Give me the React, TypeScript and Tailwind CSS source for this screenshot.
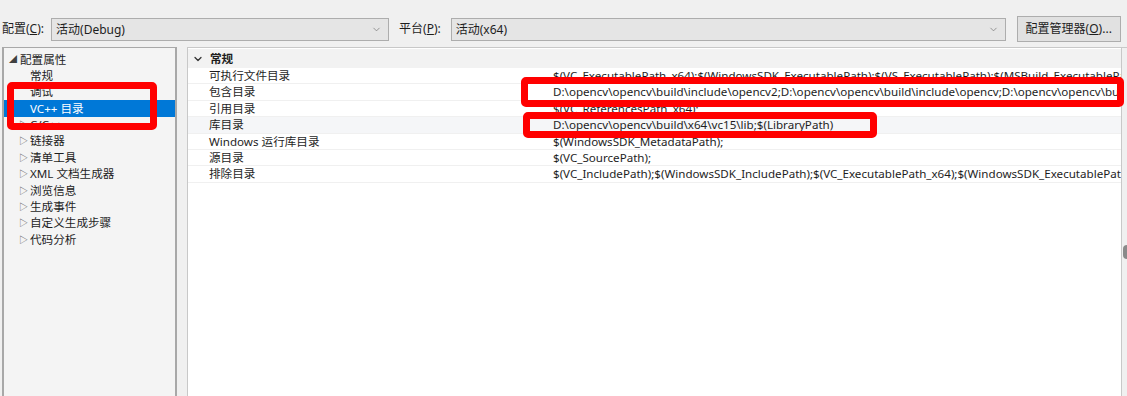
import { ChevronDown } from "lucide-react";

const font = { fontFamily: '"Noto Sans", "Noto Sans CJK SC", sans-serif' };

type TreeItem = { label: string; kind: "open" | "leaf" | "closed"; selected?: boolean };

const tree: TreeItem[] = [
  { label: "配置属性", kind: "open" },
  { label: "常规", kind: "leaf" },
  { label: "调试", kind: "leaf" },
  { label: "VC++ 目录", kind: "leaf", selected: true },
  { label: "C/C++", kind: "closed" },
  { label: "链接器", kind: "closed" },
  { label: "清单工具", kind: "closed" },
  { label: "XML 文档生成器", kind: "closed" },
  { label: "浏览信息", kind: "closed" },
  { label: "生成事件", kind: "closed" },
  { label: "自定义生成步骤", kind: "closed" },
  { label: "代码分析", kind: "closed" },
];

const props = [
  {
    name: "可执行文件目录",
    value:
      "$(VC_ExecutablePath_x64);$(WindowsSDK_ExecutablePath);$(VS_ExecutablePath);$(MSBuild_ExecutablePath);$(FxCopDir);$(PATH);",
  },
  {
    name: "包含目录",
    value:
      "D:\\opencv\\opencv\\build\\include\\opencv2;D:\\opencv\\opencv\\build\\include\\opencv;D:\\opencv\\opencv\\build\\include;$(IncludePath)",
  },
  { name: "引用目录", value: "$(VC_ReferencesPath_x64);" },
  { name: "库目录", value: "D:\\opencv\\opencv\\build\\x64\\vc15\\lib;$(LibraryPath)", tint: true },
  { name: "Windows 运行库目录", value: "$(WindowsSDK_MetadataPath);" },
  { name: "源目录", value: "$(VC_SourcePath);" },
  {
    name: "排除目录",
    value:
      "$(VC_IncludePath);$(WindowsSDK_IncludePath);$(VC_ExecutablePath_x64);$(WindowsSDK_ExecutablePath);$(VS_ExecutablePath);",
  },
];

function Combo({ text, width }: { text: string; width: string }) {
  return (
    <div className={`${width} shrink-0 h-[23px] flex items-center border border-[#adadad] bg-[#e5e5e5] pl-[4px] pr-[6px]`}>
      <span className="flex-1 text-[12px] text-[#1e1e1e] whitespace-nowrap">{text}</span>
      <ChevronDown className="w-[11px] h-[11px] text-[#707070]" strokeWidth={1.5} />
    </div>
  );
}

export default function App() {
  return (
    <div className="relative w-[1127px] h-[396px] overflow-hidden bg-[#f0f0f0] text-[#1e1e1e]" style={font}>
      {/* top bar */}
      <div className="h-[47px] flex items-end pb-[6px] pl-[2px]">
        <span className="text-[12px] mr-[7px] mb-[3px] whitespace-nowrap">
          配置(<span className="underline">C</span>):
        </span>
        <Combo text="活动(Debug)" width="w-[338px]" />
        <span className="text-[12px] ml-[10px] mr-[10px] mb-[3px] whitespace-nowrap">
          平台(<span className="underline">P</span>):
        </span>
        <Combo text="活动(x64)" width="w-[555px]" />
        <button className="shrink-0 ml-[11px] mb-[-1px] w-[104px] h-[26px] border border-[#adadad] bg-[#e1e1e1] text-[12px] whitespace-nowrap">
          配置管理器(<span className="underline">O</span>)...
        </button>
      </div>

      <div className="flex h-[349px]">
        {/* tree */}
        <div className="shrink-0 ml-[2px] w-[175px] h-full border-l-2 border-r-2 border-t border-[#a8a8a8] bg-[#f4f4f4] pt-[3px]">
          {tree.map((t) => (
            <div
              key={t.label}
              className={`h-[16.4px] flex items-center text-[11.6px] whitespace-nowrap ${
                t.selected ? "bg-[#0078d7] text-white" : ""
              }`}
            >
              {t.kind === "open" && (
                <>
                  <span className="ml-[5px] w-[11px] text-[8px] text-[#404040]">◢</span>
                  <span>{t.label}</span>
                </>
              )}
              {t.kind === "leaf" && <span className="ml-[26px]">{t.label}</span>}
              {t.kind === "closed" && (
                <>
                  <span className="ml-[15px] w-[11px] text-[9px] text-[#606060]">▷</span>
                  <span>{t.label}</span>
                </>
              )}
            </div>
          ))}
        </div>

        <div className="w-[10px] shrink-0" />

        {/* property grid */}
        <div className="flex-1 min-w-0 h-full border-l border-t border-[#c8c8c8] bg-white flex">
          <div className="flex-1 min-w-0">
            <div className="h-[19px] bg-[#f2f2f2] flex items-center mt-[1px]">
              <ChevronDown className="ml-[4px] w-[12px] h-[12px] text-[#333]" strokeWidth={2.5} />
              <span className="ml-[6px] text-[11.6px] font-bold">常规</span>
            </div>
            {props.map((p) => (
              <div
                key={p.name}
                className={`h-[16.4px] flex items-center text-[11.6px] border-b border-[#f0f0f0] ${
                  p.tint ? "bg-[#f5f6f8]" : ""
                }`}
              >
                <span className="shrink-0 w-[365px] pl-[21px] whitespace-nowrap">{p.name}</span>
                <span className="flex-1 min-w-0 overflow-hidden whitespace-nowrap">{p.value}</span>
              </div>
            ))}
          </div>
          <div className="shrink-0 w-[6px] border-l border-[#c8c8c8] bg-[#f0f0f0] relative">
            <div className="absolute top-[197px] left-[1px] w-[8px] h-[14px] rounded-full bg-[#8a8a8a]" />
          </div>
        </div>
      </div>

      {/* red annotation boxes */}
      <div className="absolute left-[7px] top-[82px] w-[150px] h-[48px] border-[7px] border-[#ff0000] rounded-[5px]" />
      <div className="absolute left-[521px] top-[77px] w-[603px] h-[30px] border-[7px] border-[#ff0000] rounded-[5px]" />
      <div className="absolute left-[523px] top-[112px] w-[354px] h-[26px] border-[7px] border-[#ff0000] rounded-[5px]" />
    </div>
  );
}
